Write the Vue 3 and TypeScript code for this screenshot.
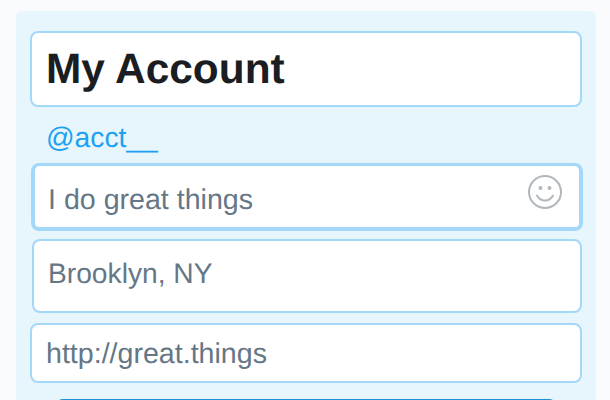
<script setup lang="ts">
const title = 'My Account'
const handle = '@acct__'
</script>

<template>
  <div class="page">
    <section class="panel">
      <div class="field title">{{ title }}</div>
      <div class="handle">{{ handle }}</div>
      <div class="field bio">
        <span class="bio-text">I do great things</span>
        <svg class="smile" width="36" height="36" viewBox="0 0 36 36" fill="none" stroke="#b1b8bd" stroke-width="2" aria-hidden="true">
          <circle cx="18" cy="18" r="16" />
          <path d="M10 21.5c2 3.6 5 5 8 5s6-1.400 8-5" stroke-linecap="round" />
          <circle cx="13.500" cy="14" r="2" fill="#b1b8bd" stroke="none" />
          <circle cx="22.500" cy="14" r="2" fill="#b1b8bd" stroke="none" />
        </svg>
      </div>
      <div class="field location">Brooklyn, NY</div>
      <div class="field url">http://great.things</div>
      <button class="save" type="button"></button>
    </section>
  </div>
</template>

<style scoped>
.page {
  height: 400px;
  overflow: hidden;
  padding: 11px 14px 0 16px;
  box-sizing: border-box;
  background: #f9fbfd;
  font-family: "Liberation Sans", Arial, sans-serif;
  text-rendering: geometricPrecision;
}
.panel {
  display: flex;
  flex-direction: column;
  align-items: flex-start;
  padding: 20px 14px 0;
  background: #e7f5fd;
  border-radius: 6px;
}
.panel > * {
  flex: none;
}
.field {
  display: flex;
  align-items: center;
  box-sizing: border-box;
  background: #fff;
  border: 2px solid #a3d8f9;
  border-radius: 8px;
  color: #657786;
  font-size: 28.6px;
}
.title {
  width: 552px;
  height: 76px;
  padding-left: 14px;
  color: #1a1d21;
  font-size: 42.4px;
  font-weight: 700;
}
.handle {
  height: 56px;
  padding: 12px 0 0 16px;
  box-sizing: border-box;
  color: #1da1f2;
  font-size: 28.2px;
  line-height: 36px;
}
.bio {
  justify-content: space-between;
  width: 552px;
  height: 68px;
  margin-left: 1px;
  padding: 0 16px 0 13px;
  border-width: 3px 4px 4px;
}
.bio-text {
  padding-top: 8px;
}
.smile {
  margin-bottom: 10px;
}
.location {
  width: 550px;
  height: 74px;
  margin: 8px 0 0 2px;
  padding: 0 0 6px 14px;
  font-size: 28.2px;
}
.url {
  width: 552px;
  height: 60px;
  margin-top: 10px;
  padding: 2px 0 0 14px;
}
.save {
  width: 502px;
  height: 40px;
  margin: 16px 0 0 25px;
  border: 0;
  border-radius: 8px;
  background: #1a91da;
}
</style>
